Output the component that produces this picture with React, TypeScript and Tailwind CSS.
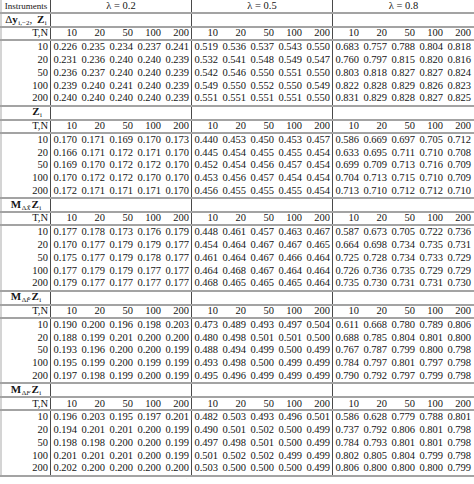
import React from "react";

const lambdas = ["0.2", "0.5", "0.8"];
const sizes = ["10", "20", "50", "100", "200"];

type Block = { label: React.ReactNode; labelClass: string; rows: string[] };

const Sub = ({ children }: { children: React.ReactNode }) => (
  <span className="text-[7px] font-normal align-[-2px] ml-[0.5px]">{children}</span>
);

const blocks: Block[] = [
  {
    label: (
      <>
        Δ<b>y</b>
        <Sub>i,−2</Sub>, <b className="ml-[2px]">Z</b>
        <Sub>i</Sub>
      </>
    ),
    labelClass: "justify-center",
    rows: [
      "0.226 0.235 0.234 0.237 0.241 0.519 0.536 0.537 0.543 0.550 0.683 0.757 0.788 0.804 0.818",
      "0.231 0.236 0.240 0.240 0.239 0.532 0.541 0.548 0.549 0.547 0.760 0.797 0.815 0.820 0.816",
      "0.236 0.237 0.240 0.240 0.239 0.542 0.546 0.550 0.551 0.550 0.803 0.818 0.827 0.827 0.824",
      "0.239 0.240 0.241 0.240 0.239 0.549 0.550 0.552 0.550 0.549 0.822 0.828 0.829 0.826 0.823",
      "0.240 0.240 0.240 0.240 0.239 0.551 0.551 0.551 0.551 0.550 0.831 0.829 0.828 0.827 0.825",
    ],
  },
  {
    label: (
      <>
        <b>Z</b>
        <Sub>i</Sub>
      </>
    ),
    labelClass: "justify-end pr-[8px]",
    rows: [
      "0.170 0.171 0.169 0.170 0.173 0.440 0.453 0.450 0.453 0.457 0.586 0.669 0.697 0.705 0.712",
      "0.166 0.171 0.172 0.171 0.170 0.445 0.454 0.455 0.455 0.454 0.633 0.695 0.711 0.710 0.708",
      "0.169 0.170 0.172 0.172 0.170 0.452 0.454 0.456 0.457 0.454 0.699 0.709 0.713 0.716 0.709",
      "0.170 0.172 0.172 0.170 0.170 0.453 0.456 0.457 0.454 0.454 0.704 0.713 0.715 0.710 0.709",
      "0.172 0.171 0.171 0.171 0.170 0.456 0.455 0.455 0.455 0.454 0.713 0.710 0.712 0.712 0.710",
    ],
  },
  {
    label: (
      <>
        <b>M</b>
        <Sub>
          Δ<i>X̃</i>
        </Sub>
        <b className="ml-[1px]">Z</b>
        <Sub>i</Sub>
      </>
    ),
    labelClass: "justify-center",
    rows: [
      "0.177 0.178 0.173 0.176 0.179 0.448 0.461 0.457 0.463 0.467 0.587 0.673 0.705 0.722 0.736",
      "0.170 0.177 0.179 0.179 0.177 0.454 0.464 0.467 0.467 0.465 0.664 0.698 0.734 0.735 0.731",
      "0.175 0.177 0.179 0.178 0.177 0.461 0.464 0.467 0.466 0.464 0.725 0.728 0.734 0.733 0.729",
      "0.177 0.179 0.179 0.177 0.177 0.464 0.468 0.467 0.464 0.464 0.726 0.736 0.735 0.729 0.729",
      "0.179 0.177 0.177 0.177 0.177 0.468 0.465 0.465 0.465 0.464 0.735 0.730 0.731 0.731 0.730",
    ],
  },
  {
    label: (
      <>
        <b>M</b>
        <Sub>
          Δ<i>F̂</i>
        </Sub>
        <b className="ml-[1px]">Z</b>
        <Sub>i</Sub>
      </>
    ),
    labelClass: "justify-center",
    rows: [
      "0.190 0.200 0.196 0.198 0.203 0.473 0.489 0.493 0.497 0.504 0.611 0.668 0.780 0.789 0.806",
      "0.188 0.199 0.201 0.200 0.200 0.480 0.498 0.501 0.501 0.500 0.688 0.785 0.804 0.801 0.800",
      "0.193 0.196 0.200 0.200 0.199 0.488 0.494 0.499 0.500 0.499 0.767 0.787 0.799 0.800 0.798",
      "0.195 0.199 0.200 0.199 0.199 0.493 0.498 0.500 0.499 0.499 0.784 0.797 0.801 0.797 0.798",
      "0.197 0.198 0.199 0.200 0.199 0.495 0.496 0.499 0.499 0.499 0.790 0.792 0.797 0.799 0.798",
    ],
  },
  {
    label: (
      <>
        <b>M</b>
        <Sub>
          Δ<i>F</i>
        </Sub>
        <b className="ml-[1px]">Z</b>
        <Sub>i</Sub>
      </>
    ),
    labelClass: "justify-center",
    rows: [
      "0.196 0.203 0.195 0.197 0.201 0.482 0.503 0.493 0.496 0.501 0.586 0.628 0.779 0.788 0.801",
      "0.194 0.201 0.201 0.200 0.199 0.490 0.501 0.502 0.500 0.499 0.737 0.792 0.806 0.801 0.798",
      "0.198 0.198 0.200 0.200 0.199 0.497 0.498 0.501 0.500 0.499 0.784 0.793 0.801 0.801 0.798",
      "0.201 0.201 0.201 0.200 0.199 0.501 0.502 0.502 0.499 0.499 0.802 0.805 0.804 0.799 0.798",
      "0.202 0.200 0.200 0.200 0.200 0.503 0.500 0.500 0.500 0.499 0.806 0.800 0.800 0.800 0.799",
    ],
  },
];

// one row of the table: first column + three lambda groups
function Row({
  first,
  firstClass = "justify-end pr-[2px]",
  cells,
  groupContent,
  height,
  line,
}: {
  first: React.ReactNode;
  firstClass?: string;
  cells?: string[];
  groupContent?: (g: number) => React.ReactNode;
  height: string;
  line?: boolean;
}) {
  return (
    <div className={`flex ${height} ${line ? "border-b-2 border-b-[#a3a3a3]" : ""}`}>
      <div className={`w-[51px] shrink-0 flex items-center border-l-2 border-l-[#d4d4d4] border-r border-r-[#4a4a4a] ${firstClass}`}>
        {first}
      </div>
      {lambdas.map((_, g) => (
        <div
          key={g}
          className={`w-[141px] shrink-0 flex items-center ${g < 2 ? "border-r border-r-[#4a4a4a]" : ""}`}
        >
          {groupContent
            ? groupContent(g)
            : cells &&
              cells.slice(g * 5, g * 5 + 5).map((c, i) => (
                <div key={i} className="w-[28px] text-right pr-[2px]">
                  {c}
                </div>
              ))}
        </div>
      ))}
    </div>
  );
}

export default function App() {
  const header = [...sizes, ...sizes, ...sizes];
  return (
    <div className="w-[474px] bg-white text-[#141414] text-[10.5px] leading-none" style={{ fontFamily: '"Liberation Serif", "Times New Roman", serif' }}>
      <Row
        height="h-[14px]"
        line
        firstClass="justify-center text-[9px]"
        first="Instruments"
        groupContent={(g) => <div className="w-full text-center">λ = {lambdas[g]}</div>}
      />
      {blocks.map((b, bi) => (
        <div key={bi}>
          <Row height="h-[14px]" line firstClass={`text-[11px] ${b.labelClass}`} first={<span>{b.label}</span>} groupContent={() => null} />
          <Row height="h-[13px]" line first="T,N" cells={header} />
          {b.rows.map((r, ri) => (
            <Row
              key={ri}
              height={ri === 4 ? "h-[14.4px]" : "h-[12.8px]"}
              line={ri === 4}
              first={sizes[ri]}
              cells={r.split(" ")}
            />
          ))}
        </div>
      ))}
      <div className="pl-[186px] pt-[1px] text-[4px] text-[#aaa] leading-[4px]">ˈ</div>
    </div>
  );
}
